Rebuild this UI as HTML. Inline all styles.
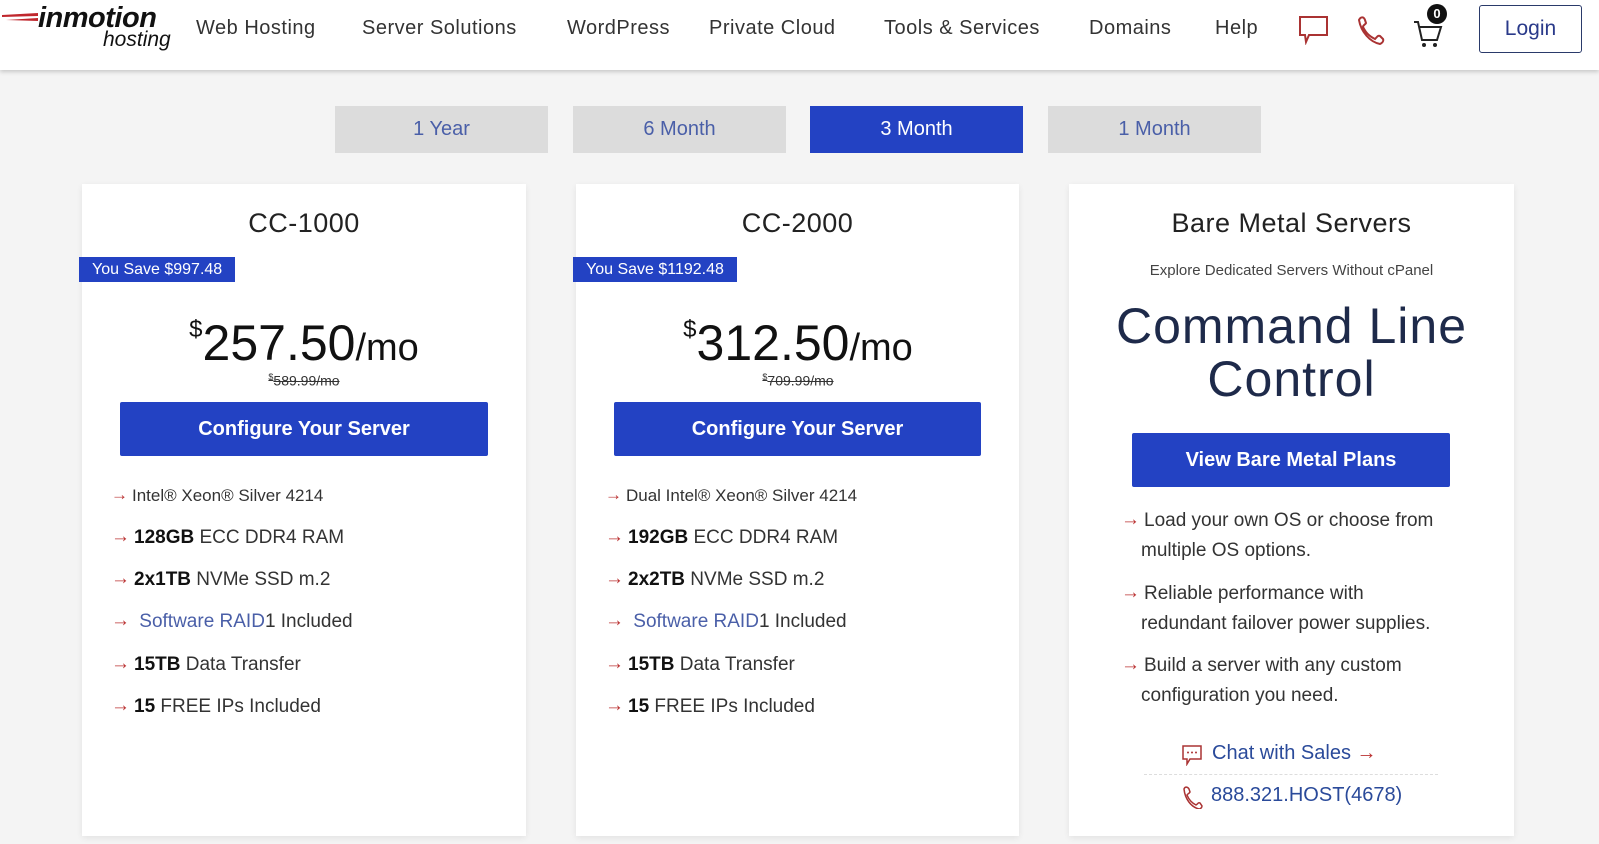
<!DOCTYPE html>
<html><head><meta charset="utf-8"><style>
*{margin:0;padding:0;box-sizing:border-box}
body{width:1599px;height:844px;overflow:hidden;background:#f4f4f4;font-family:"Liberation Sans",sans-serif;position:relative;color:#222}
.hdr{position:absolute;left:0;top:0;width:1599px;height:70px;background:#fff;box-shadow:0 2px 4px rgba(0,0,0,.18)}
.nav{position:absolute;top:17px;font-size:20px;color:#333;letter-spacing:.5px}
.a{position:absolute}
.tab{position:absolute;top:106px;height:47px;width:213px;background:#dcdcdc;color:#4a5fa8;font-size:20px;text-align:center;line-height:47px}
.tab.on{background:#2342c3;color:#fff}
.card{position:absolute;top:184px;height:652px;width:444px;background:#fff;box-shadow:0 2px 6px rgba(0,0,0,.07)}
.ttl{position:absolute;width:100%;text-align:center;font-size:27px;color:#222;letter-spacing:.5px}
.save{position:absolute;height:25px;background:#2342c3;color:#fff;font-size:16px;line-height:25px;padding:0 13px}
.price{position:absolute;width:444px;text-align:center;font-size:50px;color:#111}
.price sup{font-size:24px;vertical-align:top;position:relative;top:2px}
.price span{font-size:38px}
.old{position:absolute;width:444px;text-align:center;font-size:14px;color:#333;text-decoration:line-through}
.btn{position:absolute;background:#2342c3;color:#fff;font-weight:bold;font-size:20px;text-align:center;border-radius:2px}
.f{position:absolute;font-size:19px;color:#333;white-space:nowrap}
.f i{font-style:normal;color:#b33;margin-right:4px;position:relative;top:-1px}
.f b{color:#111}
.lk{color:#4a5fa8}
.bl{padding-left:20px;text-indent:-20px;line-height:30px}
</style></head><body>
<div class="hdr">
 <svg class="a" style="left:0;top:9px" width="40" height="16"><path d="M2 6 L38 4 L38 7 L2 8Z" fill="#c0272d"/><path d="M6 11 L38 9 L38 12Z" fill="#c0272d"/></svg>
 <div class="a" style="left:38px;top:2px;font-size:29px;font-weight:bold;font-style:italic;color:#111;letter-spacing:-.5px">inmotion</div>
 <div class="a" style="left:103px;top:28px;font-size:21px;font-style:italic;color:#111">hosting</div>
 <div class="nav" style="left:196px">Web Hosting</div>
 <div class="nav" style="left:362px">Server Solutions</div>
 <div class="nav" style="left:567px">WordPress</div>
 <div class="nav" style="left:709px">Private Cloud</div>
 <div class="nav" style="left:884px">Tools &amp; Services</div>
 <div class="nav" style="left:1089px">Domains</div>
 <div class="nav" style="left:1215px">Help</div>
 <svg class="a" style="left:1298px;top:15px" width="32" height="30"><path d="M2 2H29V20H11L8 27L7 20H2Z" fill="none" stroke="#a33" stroke-width="2"/></svg>
 <svg class="a" style="left:1355px;top:14px" width="32" height="32"><path d="M4 6C6 2 9 3 10 6L11 9C10 11 8 11 8 13C11 19 14 22 20 25C22 23 23 21 25 22L28 25C29 27 27 29 25 30C15 28 6 18 4 6Z" fill="none" stroke="#a33" stroke-width="2"/></svg>
 <svg class="a" style="left:1412px;top:12px" width="36" height="36"><path d="M2 10H6L10 28H25L29 15H8" fill="none" stroke="#222" stroke-width="2"/><circle cx="12" cy="33" r="2" fill="#222"/><circle cx="23" cy="33" r="2" fill="#222"/></svg>
 <div class="a" style="left:1427px;top:4px;width:20px;height:20px;border-radius:50%;background:#111;color:#fff;font-size:13px;font-weight:bold;text-align:center;line-height:20px">0</div>
 <div class="a" style="left:1479px;top:5px;width:103px;height:48px;border:1.5px solid #2a3a6a;border-radius:3px;color:#2a3a8a;font-size:21px;text-align:center;line-height:46px">Login</div>
</div>
<div class="tab" style="left:335px">1 Year</div>
<div class="tab" style="left:573px">6 Month</div>
<div class="tab on" style="left:810px">3 Month</div>
<div class="tab" style="left:1048px">1 Month</div>

<div class="card" style="left:82px">
 <div class="ttl" style="top:24px">CC-1000</div>
 <div class="save" style="left:-3px;top:73px">You Save $997.48</div>
 <div class="price" style="top:130px"><sup>$</sup>257.50<span>/mo</span></div>
 <div class="old" style="top:188px"><sup style="font-size:9px">$</sup>589.99/mo</div>
 <div class="btn" style="left:38px;top:218px;width:368px;height:54px;line-height:54px">Configure Your Server</div>
 <div class="f" style="left:29px;top:302px;font-size:17px"><i>→</i>Intel® Xeon® Silver 4214</div>
 <div class="f" style="left:29px;top:343px"><i>→</i><b>128GB</b> ECC DDR4 RAM</div>
 <div class="f" style="left:29px;top:385px"><i>→</i><b>2x1TB</b> NVMe SSD m.2</div>
 <div class="f" style="left:29px;top:427px"><i>→</i> <span class="lk">Software RAID</span>1 Included</div>
 <div class="f" style="left:29px;top:470px"><i>→</i><b>15TB</b> Data Transfer</div>
 <div class="f" style="left:29px;top:512px"><i>→</i><b>15</b> FREE IPs Included</div>
</div>

<div class="card" style="left:576px;width:443px">
 <div class="ttl" style="top:24px">CC-2000</div>
 <div class="save" style="left:-3px;top:73px">You Save $1192.48</div>
 <div class="price" style="top:130px"><sup>$</sup>312.50<span>/mo</span></div>
 <div class="old" style="top:188px"><sup style="font-size:9px">$</sup>709.99/mo</div>
 <div class="btn" style="left:38px;top:218px;width:367px;height:54px;line-height:54px">Configure Your Server</div>
 <div class="f" style="left:29px;top:302px;font-size:17px"><i>→</i>Dual Intel® Xeon® Silver 4214</div>
 <div class="f" style="left:29px;top:343px"><i>→</i><b>192GB</b> ECC DDR4 RAM</div>
 <div class="f" style="left:29px;top:385px"><i>→</i><b>2x2TB</b> NVMe SSD m.2</div>
 <div class="f" style="left:29px;top:427px"><i>→</i> <span class="lk">Software RAID</span>1 Included</div>
 <div class="f" style="left:29px;top:470px"><i>→</i><b>15TB</b> Data Transfer</div>
 <div class="f" style="left:29px;top:512px"><i>→</i><b>15</b> FREE IPs Included</div>
</div>

<div class="card" style="left:1069px;width:445px">
 <div class="ttl" style="top:24px">Bare Metal Servers</div>
 <div class="a" style="width:100%;text-align:center;top:78px;font-size:15px;color:#444">Explore Dedicated Servers Without cPanel</div>
 <div class="a" style="width:100%;text-align:center;top:116px;font-size:50px;line-height:53px;color:#1e2a4a;letter-spacing:1px">Command Line<br>Control</div>
 <div class="btn" style="left:63px;top:249px;width:318px;height:54px;line-height:54px">View Bare Metal Plans</div>
 <div class="f bl" style="left:52px;top:322px"><i>→</i>Load your own OS or choose from<br>multiple OS options.</div>
 <div class="f bl" style="left:52px;top:395px"><i>→</i>Reliable performance with<br>redundant failover power supplies.</div>
 <div class="f bl" style="left:52px;top:467px"><i>→</i>Build a server with any custom<br>configuration you need.</div>
 <svg class="a" style="left:112px;top:560px" width="22" height="22"><path d="M2 2H20V15H9L6 20V15H2Z" fill="none" stroke="#a33" stroke-width="1.5"/><circle cx="7" cy="8.5" r="1" fill="#a33"/><circle cx="11" cy="8.5" r="1" fill="#a33"/><circle cx="15" cy="8.5" r="1" fill="#a33"/></svg>
 <div class="f" style="left:143px;top:558px;font-size:20px;color:#2a4a9a">Chat with Sales <span style="color:#b33">→</span></div>
 <div class="a" style="left:75px;top:590px;width:294px;border-top:1px dashed #ddd"></div>
 <svg class="a" style="left:112px;top:601px" width="22" height="24"><path d="M3 4C4 1 7 2 8 4L9 7C8 9 6 9 6 10C8 15 11 18 15 20C17 19 17 17 19 18L21 21C21 23 19 24 18 24C10 22 4 14 3 4Z" fill="none" stroke="#a33" stroke-width="1.5"/></svg>
 <div class="f" style="left:142px;top:600px;font-size:20px;color:#2a4a9a">888.321.HOST(4678)</div>
</div>
</body></html>
